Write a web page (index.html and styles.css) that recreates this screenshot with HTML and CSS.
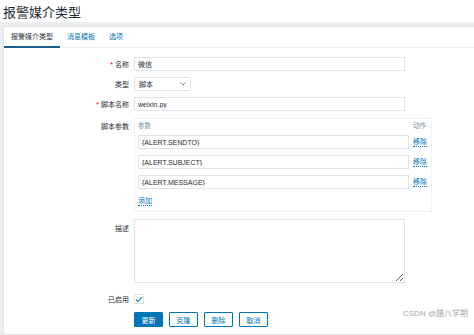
FILE: index.html
```html
<!DOCTYPE html>
<html lang="zh-CN">
<head>
    <meta charset="UTF-8">
    <meta name="viewport" content="width=device-width, initial-scale=1.0">
    <title>报警媒介类型</title>
    <link rel="stylesheet" href="styles.css">
</head>
<body>
    <h1 class="page-title">报警媒介类型</h1>

    <div class="page-content">
        <div class="media-card">
            <ul class="tabs">
                <li class="tab active">报警媒介类型</li>
                <li class="tab">消息模板</li>
                <li class="tab">选项</li>
            </ul>

            <form class="media-form">
                <div class="form-row">
                    <label class="form-label"><span class="required">*</span> 名称</label>
                    <input type="text" class="text-input wide" value="微信">
                </div>
                <div class="form-row">
                    <label class="form-label">类型</label>
                    <div class="select-box">
                        <span>脚本</span>
                        <svg class="chevron" width="6" height="4" viewBox="0 0 6 4"><path d="M0.5 0.5 L3 3 L5.5 0.5" fill="none" stroke="#5a6670" stroke-width="0.8"/></svg>
                    </div>
                </div>
                <div class="form-row">
                    <label class="form-label"><span class="required">*</span> 脚本名称</label>
                    <input type="text" class="text-input wide" value="weixin.py">
                </div>

                <div class="form-row top">
                    <label class="form-label params-label">脚本参数</label>
                    <div class="params-box">
                        <div class="params-grid">
                            <span class="params-head">参数</span>
                            <span class="params-head">动作</span>

                            <input type="text" class="text-input" value="{ALERT.SENDTO}">
                            <a class="link">移除</a>
                            <input type="text" class="text-input" value="{ALERT.SUBJECT}">
                            <a class="link">移除</a>
                            <input type="text" class="text-input" value="{ALERT.MESSAGE}">
                            <a class="link">移除</a>
                        </div>
                        <a class="link add-link">添加</a>
                    </div>
                </div>

                <div class="form-row top">
                    <label class="form-label desc-label">描述</label>
                    <textarea class="desc-input"></textarea>
                </div>

                <div class="form-row check-row">
                    <label class="form-label">已启用</label>
                    <span class="checkbox">
                        <svg width="8" height="7" viewBox="0 0 8 7"><path d="M1 3.6 L3 5.5 L7 1" fill="none" stroke="#0275b8" stroke-width="1.1"/></svg>
                    </span>
                </div>

                <div class="form-row">
                    <span></span>
                    <div class="buttons">
                        <button type="button" class="btn primary">更新</button>
                        <button type="button" class="btn">克隆</button>
                        <button type="button" class="btn">删除</button>
                        <button type="button" class="btn">取消</button>
                    </div>
                </div>
            </form>

            <div class="watermark">CSDN @腊八学期</div>
        </div>
    </div>
</body>
</html>
```

FILE: styles.css
```css
body {
    font-family: "Liberation Sans", "Noto Sans CJK SC", sans-serif;
    background-color: #ffffff;
    color: #1f2c33;
    margin: 0;
    height: 335px;
    display: flex;
    flex-direction: column;
    overflow: hidden;
}

.page-title {
    font-size: 13px;
    font-weight: normal;
    line-height: 16px;
    margin: 0;
    padding: 5px 0 1px 3px;
    height: 16px;
}

.page-content {
    flex: 1;
    background-color: #ebeef0;
    padding: 4px 0 0 3px;
}

.media-card {
    position: relative;
    height: 100%;
    box-sizing: border-box;
    background-color: #ffffff;
    border: 1px solid #dfe4e7;
    border-right: none;
}

.tabs {
    list-style: none;
    margin: 0;
    padding: 0 0 0 0;
    display: flex;
    height: 20px;
    border-bottom: 1px solid #ebeef0;
}

.tab {
    font-size: 7px;
    line-height: 20px;
    padding: 0 7px;
    color: #0275b8;
}

.tab.active {
    color: #1f2c33;
    border-bottom: 2px solid #1f5d8a;
    height: 19px;
}

.media-form {
    padding-top: 9px;
}

.form-row {
    display: grid;
    grid-template-columns: 125px 1fr;
    column-gap: 5px;
    align-items: center;
    margin-bottom: 6px;
}

.form-row.top {
    align-items: start;
}

.form-label {
    font-size: 7px;
    text-align: right;
    color: #1f2c33;
}

.required {
    color: #d40000;
}

.text-input {
    font-family: "Liberation Sans", "Noto Sans CJK SC", sans-serif;
    font-size: 7px;
    color: #1f2c33;
    height: 14px;
    box-sizing: border-box;
    border: 1px solid #dfe4e7;
    background-color: #ffffff;
    padding: 0 3px;
    margin: 0;
    outline: none;
}

.text-input.wide {
    width: 271px;
}

.select-box {
    width: 57px;
    height: 14px;
    box-sizing: border-box;
    border: 1px solid #dfe4e7;
    font-size: 7px;
    padding: 0 4px;
    display: flex;
    align-items: center;
    justify-content: space-between;
}

.params-label {
    padding-top: 4px;
}

.params-box {
    width: 298px;
    box-sizing: border-box;
    border: 1px solid #f0f2f3;
    padding: 1px 3px 4px 3px;
    margin-top: 1px;
}

.params-grid {
    display: grid;
    grid-template-columns: 271px auto;
    column-gap: 4px;
    row-gap: 6px;
    align-items: center;
}

.params-head {
    font-size: 6.5px;
    color: #768d99;
    height: 12px;
    line-height: 12px;
    margin-bottom: -3px;
}

.params-grid .text-input {
    width: 271px;
}

.link {
    font-size: 7px;
    color: #0275b8;
    border-bottom: 1px dotted #0275b8;
    line-height: 8px;
    justify-self: start;
    cursor: pointer;
}

.add-link {
    display: inline-block;
    margin-top: 7px;
}

.desc-label {
    padding-top: 5px;
}

.desc-input {
    width: 271px;
    height: 64px;
    box-sizing: border-box;
    border: 1px solid #dfe4e7;
    margin: 1px 0 0 0;
    padding: 2px;
    resize: both;
    outline: none;
}

.check-row {
    margin-top: 11px;
    margin-bottom: 8px;
}

.checkbox {
    width: 10px;
    height: 10px;
    box-sizing: border-box;
    border: 1px solid #dfe4e7;
    display: flex;
    align-items: center;
    justify-content: center;
}

.buttons {
    display: flex;
    gap: 6px;
}

.btn {
    font-family: "Liberation Sans", "Noto Sans CJK SC", sans-serif;
    font-size: 7px;
    width: 29px;
    height: 15px;
    padding: 0;
    margin: 0;
    border: 1px solid #0275b8;
    border-radius: 1px;
    background-color: #ffffff;
    color: #0275b8;
    cursor: pointer;
}

.btn.primary {
    background-color: #0275b8;
    color: #ffffff;
}

.watermark {
    position: absolute;
    right: 6px;
    bottom: 16px;
    font-size: 8px;
    color: #a0a6aa;
}
```
